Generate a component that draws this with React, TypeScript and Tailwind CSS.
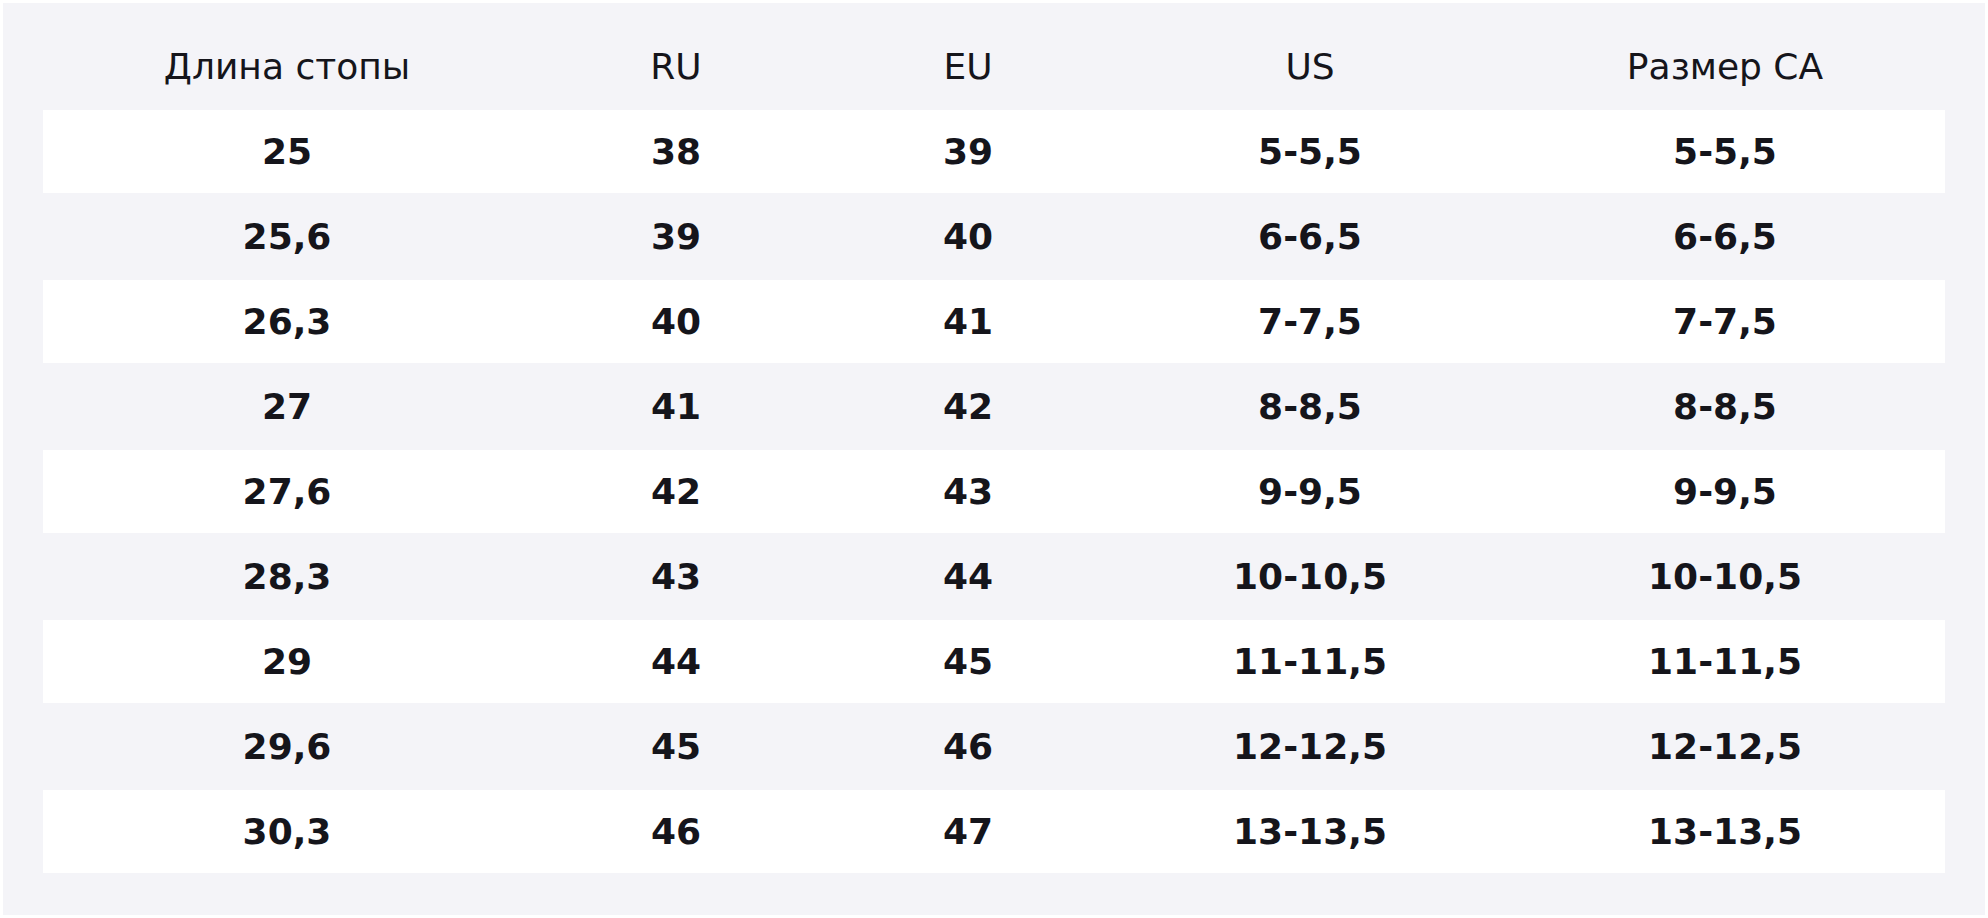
const headers = ["Длина стопы", "RU", "EU", "US", "Размер CA"];

const rows: string[][] = [
  ["25", "38", "39", "5-5,5", "5-5,5"],
  ["25,6", "39", "40", "6-6,5", "6-6,5"],
  ["26,3", "40", "41", "7-7,5", "7-7,5"],
  ["27", "41", "42", "8-8,5", "8-8,5"],
  ["27,6", "42", "43", "9-9,5", "9-9,5"],
  ["28,3", "43", "44", "10-10,5", "10-10,5"],
  ["29", "44", "45", "11-11,5", "11-11,5"],
  ["29,6", "45", "46", "12-12,5", "12-12,5"],
  ["30,3", "46", "47", "13-13,5", "13-13,5"],
];

const cols = "grid grid-cols-[488px_290px_294px_390px_440px]";

export default function App() {
  return (
    <div className="bg-white p-[3px] w-[1988px] h-[918px] font-['DejaVu_Sans',sans-serif] text-[#15151b]">
      <div className="bg-[#f4f4f8] h-[912px] pt-5 px-10 pb-[42px]">
        {/* header */}
        <div className={`${cols} h-[87px] items-center text-[36px]`}>
          {headers.map((h) => (
            <div key={h} className="text-center">
              {h}
            </div>
          ))}
        </div>

        {/* size rows, white on odd */}
        {rows.map((row, i) => (
          <div
            key={row[0]}
            className={`${cols} items-center text-[36px] font-bold ${
              i % 2 === 0 ? "bg-white h-[83px]" : "h-[87px]"
            }`}
          >
            {row.map((cell, j) => (
              <div key={j} className="text-center">
                {cell}
              </div>
            ))}
          </div>
        ))}
      </div>
    </div>
  );
}
